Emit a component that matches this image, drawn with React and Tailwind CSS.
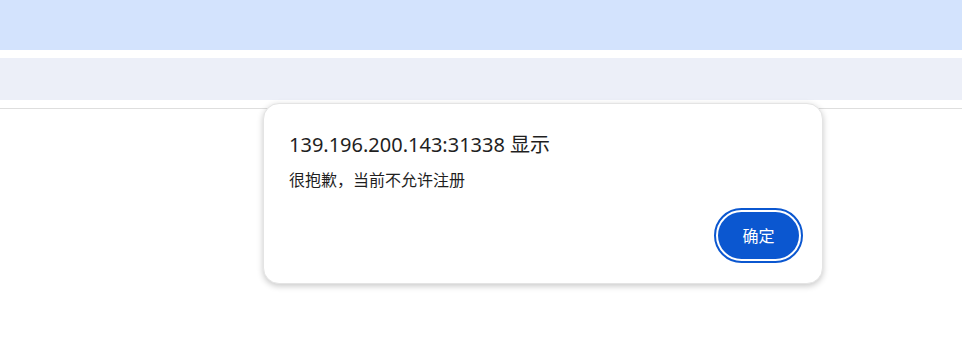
export default function App() {
  return (
    <div className="relative w-[962px] h-[364px] bg-white overflow-hidden" style={{ fontFamily: '"Noto Sans", "Noto Sans CJK SC", sans-serif' }}>
      <div className="h-[50px] bg-[#d3e3fd]" />
      <div className="h-[8px] bg-white" />
      <div className="h-[42px] bg-[#eceff8]" />
      <div className="h-[8px] bg-white" />
      <div className="h-px bg-[#dedede]" />
      <div className="absolute left-[263px] top-[103px] w-[560px] h-[181px] rounded-[16px] bg-white border border-[#e4e4e4] shadow-[0_2px_6px_rgba(0,0,0,0.22)] flex flex-col pl-[25px] pr-[23px]">
        <div className="mt-[27px] text-[20px] leading-[28px] text-[#1f1f1f]">139.196.200.143:31338 显示</div>
        <div className="mt-[10px] text-[16px] leading-[22px] text-[#1f1f1f]">很抱歉，当前不允许注册</div>
        <div className="flex justify-end mt-[21px]">
          <button className="w-[81px] h-[47px] rounded-full bg-[#0b57d0] text-white text-[16px] outline-2 outline-offset-2 outline-[#0b57d0] outline-solid">确定</button>
        </div>
      </div>
    </div>
  );
}
